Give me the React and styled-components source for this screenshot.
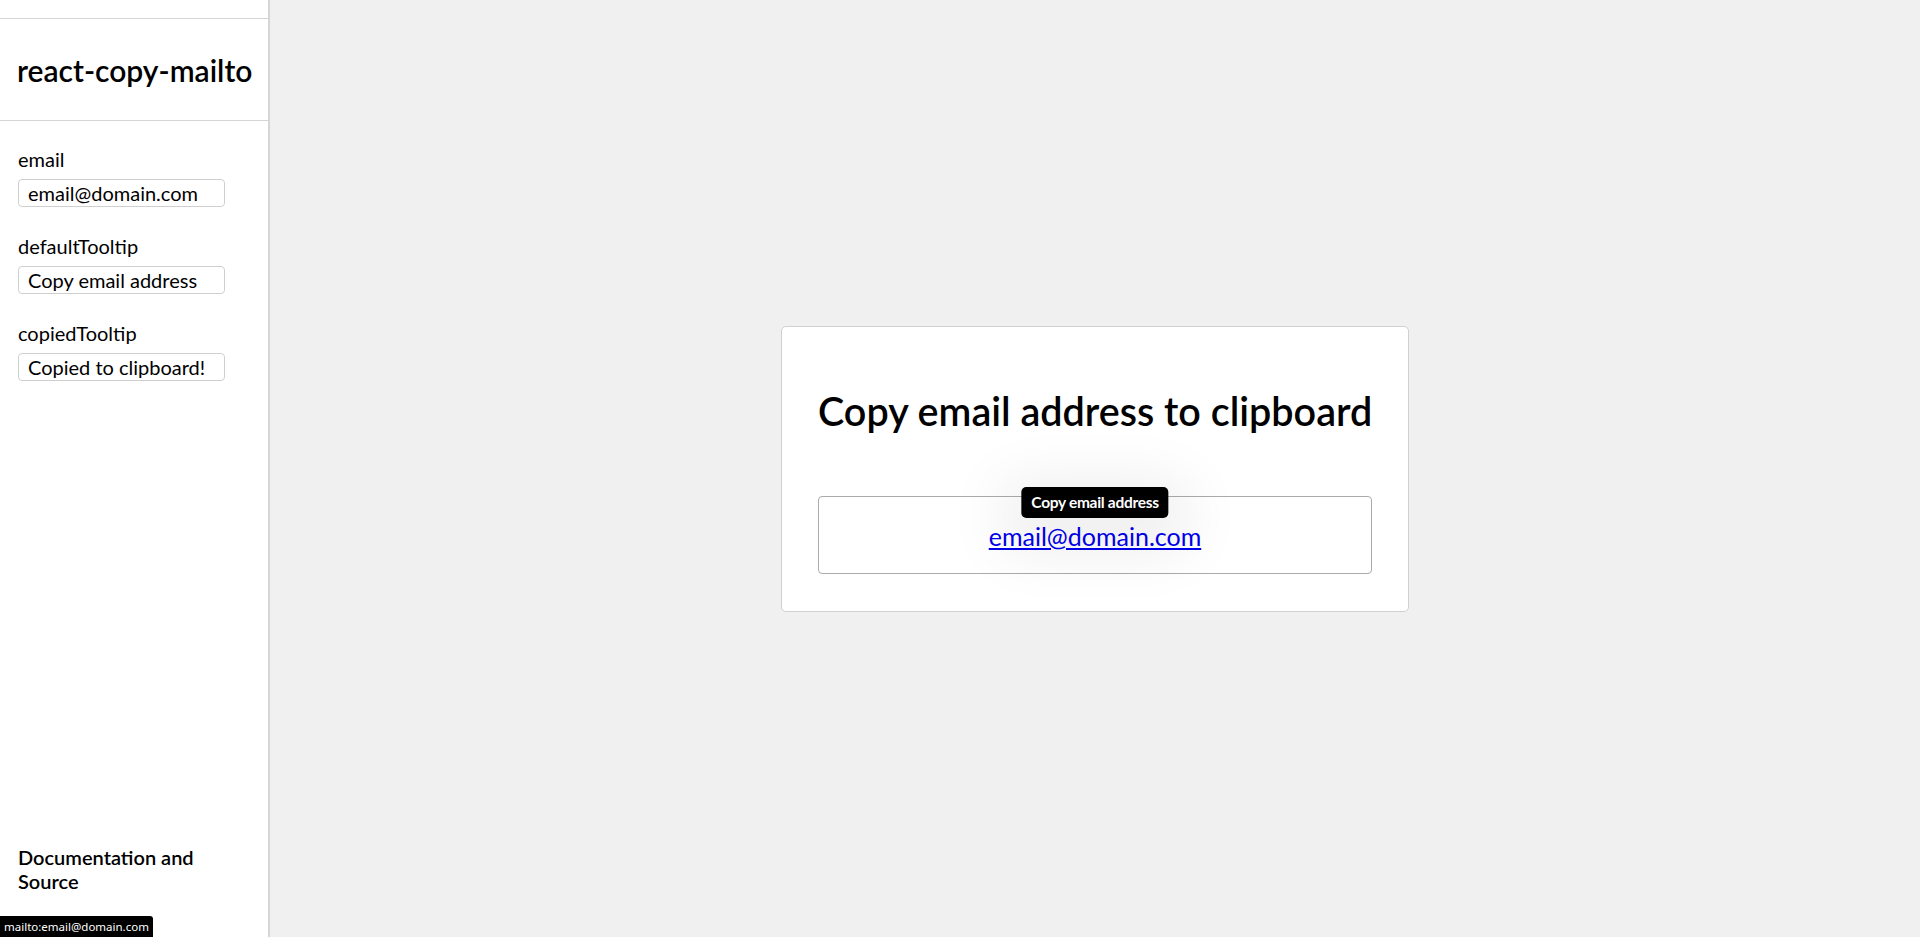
import React, { useState } from "react";
import styled, { createGlobalStyle } from "styled-components";

const GlobalStyle = createGlobalStyle`
  html, body {
    margin: 0;
    padding: 0;
    height: 100%;
  }
  body {
    font-family: Lato, "Open Sans", sans-serif;
    color: #000;
  }
  #root {
    height: 100%;
  }
`;

const App = () => {
    const [email, setEmail] = useState("email@domain.com");
    const [defaultTooltip, setDefaultTooltip] = useState("Copy email address");
    const [copiedTooltip, setCopiedTooltip] = useState("Copied to clipboard!");

    return (
        <Page>
            <GlobalStyle />
            <Sidebar>
                <SidebarHeader>
                    <SidebarTitle>react-copy-mailto</SidebarTitle>
                </SidebarHeader>
                <Form>
                    <Field>
                        <Label>email</Label>
                        <Input value={email} onChange={(e) => setEmail(e.target.value)} />
                    </Field>
                    <Field>
                        <Label>defaultTooltip</Label>
                        <Input value={defaultTooltip} onChange={(e) => setDefaultTooltip(e.target.value)} />
                    </Field>
                    <Field>
                        <Label>copiedTooltip</Label>
                        <Input value={copiedTooltip} onChange={(e) => setCopiedTooltip(e.target.value)} />
                    </Field>
                </Form>
                <Footer>Documentation and Source</Footer>
            </Sidebar>

            <Main>
                <Card>
                    <CardTitle>Copy email address to clipboard</CardTitle>
                    <MailBox>
                        <TooltipWrap>
                            <Tooltip>{defaultTooltip}</Tooltip>
                            <MailLink href={`mailto:${email}`}>{email}</MailLink>
                        </TooltipWrap>
                    </MailBox>
                </Card>
            </Main>

            <StatusBar>mailto:{email}</StatusBar>
        </Page>
    );
};

export default App;

const Page = styled.div`
    display: flex;
    height: 100vh;
    background: #f0f0f0;
`;

const Sidebar = styled.aside`
    width: 268px;
    flex-shrink: 0;
    background: #fff;
    border-right: 2px solid #d6d6d6;
    padding-top: 18px;
    display: flex;
    flex-direction: column;
`;

const SidebarHeader = styled.div`
    height: 101px;
    border-top: 1px solid #d4d4d4;
    border-bottom: 1px solid #d4d4d4;
    display: flex;
    align-items: center;
    padding: 0 17px;
`;

const SidebarTitle = styled.h1`
    margin: 0;
    font-size: 30px;
    font-weight: 600;
    white-space: nowrap;
`;

const Form = styled.div`
    display: flex;
    flex-direction: column;
    gap: 27px;
    padding: 26px 18px 0;
`;

const Field = styled.label`
    display: flex;
    flex-direction: column;
    gap: 8px;
`;

const Label = styled.span`
    font-size: 20px;
    line-height: 24px;
`;

const Input = styled.input`
    box-sizing: border-box;
    width: 207px;
    height: 28px;
    padding: 0 9px;
    font-family: Lato, sans-serif;
    font-size: 20px;
    color: #000;
    border: 1px solid #cfcfcf;
    border-radius: 4px;
    outline: none;
`;

const Footer = styled.h3`
    margin: auto 0 0;
    padding: 0 18px 44px;
    width: 190px;
    font-size: 20px;
    line-height: 24px;
    font-weight: 600;
`;

const Main = styled.main`
    flex: 1;
    display: flex;
    align-items: center;
    justify-content: center;
`;

const Card = styled.div`
    box-sizing: border-box;
    width: 628px;
    background: #fff;
    border: 1px solid #d0d0d0;
    border-radius: 5px;
    padding: 60px 36px 37px;
`;

const CardTitle = styled.h2`
    margin: 0 0 61px;
    font-size: 39.5px;
    line-height: 48px;
    font-weight: 600;
    text-align: center;
    white-space: nowrap;
`;

const MailBox = styled.div`
    box-sizing: border-box;
    height: 78px;
    border: 1px solid #ababab;
    border-radius: 4px;
    display: flex;
    align-items: center;
    justify-content: center;
`;

const TooltipWrap = styled.div`
    position: relative;
    display: inline-block;
    padding-top: 2px;
`;

const Tooltip = styled.div`
    position: absolute;
    left: 50%;
    bottom: calc(100% + 1px);
    transform: translateX(-50%);
    white-space: nowrap;
    background: #000;
    color: #fff;
    font-size: 15.5px;
    font-weight: 700;
    letter-spacing: -0.3px;
    padding: 0 10px;
    height: 31px;
    line-height: 31px;
    border-radius: 5px;
    box-shadow: 0 14px 60px 20px rgba(0, 0, 0, 0.07);
`;

const MailLink = styled.a`
    font-size: 25px;
    color: #0000ee;
    text-decoration: underline;
    line-height: 30px;
    display: block;
`;

const StatusBar = styled.div`
    position: fixed;
    left: 0;
    bottom: 0;
    background: #000;
    color: #fff;
    font-family: "Noto Sans", "Open Sans", sans-serif;
    font-size: 11.5px;
    line-height: 21px;
    padding: 0 4px;
    border-top-right-radius: 3px;
`;
